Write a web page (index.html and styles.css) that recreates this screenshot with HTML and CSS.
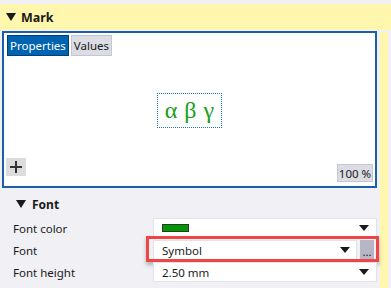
FILE: index.html
```html
<!DOCTYPE html>
<html>
<head>
<meta charset="utf-8">
<link rel="stylesheet" href="styles.css">
</head>
<body>
<div class="page">
  <div class="topgap"></div>
  <div class="header">
    <svg class="tri" width="10" height="8" viewBox="0 0 10 8"><path d="M0 0H10L5 8Z" fill="#1a1a1a"/></svg>
    <span>Mark</span>
  </div>
  <div class="main">
    <div class="content">
      <div class="panel">
        <div class="tabs">
          <div class="tab active">Properties</div>
          <div class="tab">Values</div>
        </div>
        <div class="canvas">
          <div class="greek">α β γ</div>
        </div>
        <div class="bottom">
          <div class="plus">
            <svg width="14" height="14" viewBox="0 0 14 14"><path d="M7 1V13M1 7H13" stroke="#333" stroke-width="2"/></svg>
          </div>
          <div class="zoom">100 %</div>
        </div>
      </div>
      <div class="section">
        <svg class="tri" width="10" height="8" viewBox="0 0 10 8"><path d="M0 0H10L5 8Z" fill="#1a1a1a"/></svg>
        <span>Font</span>
      </div>
      <div class="props">
        <div class="row">
          <div class="label">Font color</div>
          <div class="field">
            <span class="swatch"></span>
            <svg class="arrow" width="10" height="6" viewBox="0 0 10 6"><path d="M0 0H10L5 6Z" fill="#1a1a1a"/></svg>
          </div>
        </div>
        <div class="row hl">
          <div class="label">Font</div>
          <div class="combo">
            <div class="field narrow">
              <span class="val">Symbol</span>
              <svg class="arrow" width="10" height="6" viewBox="0 0 10 6"><path d="M0 0H10L5 6Z" fill="#1a1a1a"/></svg>
            </div>
            <div class="dots">...</div>
          </div>
          <div class="redbox"></div>
        </div>
        <div class="row">
          <div class="label">Font height</div>
          <div class="field">
            <span class="val">2.50 mm</span>
            <svg class="arrow" width="10" height="6" viewBox="0 0 10 6"><path d="M0 0H10L5 6Z" fill="#1a1a1a"/></svg>
          </div>
        </div>
      </div>
    </div>
    <div class="strip"></div>
  </div>
</div>
</body>
</html>
```

FILE: styles.css
```css
html, body {
  margin: 0;
  padding: 0;
}
body {
  width: 391px;
  height: 288px;
  overflow: hidden;
  background: #f0f0f5;
  font-family: "Noto Sans", "Open Sans", sans-serif;
  font-size: 11.5px;
  color: #1a1a1a;
}
.page {
  display: flex;
  flex-direction: column;
  height: 288px;
}
.topgap {
  height: 4px;
}
.header {
  height: 26px;
  background: #fff7ad;
  display: flex;
  align-items: center;
  padding-left: 6px;
  gap: 5px;
  font-weight: bold;
  font-size: 12.5px;
}
.main {
  flex: 1;
  display: flex;
  padding-top: 1px;
}
.content {
  margin-left: 2px;
  width: 375px;
  display: flex;
  flex-direction: column;
}
.strip {
  margin-left: 3px;
  margin-top: 1px;
  width: 8px;
  background: #fff7ad;
}
.panel {
  height: 157px;
  box-sizing: border-box;
  border: 2px solid #1d5ea8;
  background: #fff;
  padding: 2px 2px 4px 2px;
  display: flex;
  flex-direction: column;
}
.tabs {
  display: flex;
  gap: 2px;
  margin-left: 1px;
  height: 21px;
}
.tab {
  box-sizing: border-box;
  height: 21px;
  padding: 0 2px;
  display: flex;
  align-items: center;
  background: #dcdce4;
  border: 1px solid #c6c6d0;
  color: #1a1a1a;
}
.tab.active {
  background: #0063b1;
  border-color: #003f7a;
  color: #fff;
}
.canvas {
  flex: 1;
  display: flex;
  justify-content: center;
  align-items: flex-start;
  padding-top: 37px;
}
.greek {
  width: 65px;
  height: 35px;
  box-sizing: border-box;
  border: 1px dotted #1f6fbf;
  color: #1a9e1a;
  font-family: "Liberation Serif", "DejaVu Serif", serif;
  font-size: 24px;
  display: flex;
  align-items: center;
  justify-content: center;
  white-space: nowrap;
  word-spacing: 1px;
}
.bottom {
  height: 24px;
  display: flex;
  justify-content: space-between;
}
.plus {
  width: 20px;
  height: 18px;
  background: #dcdcdc;
  display: flex;
  align-items: center;
  justify-content: center;
}
.zoom {
  align-self: flex-end;
  box-sizing: border-box;
  width: 36px;
  height: 18px;
  background: #dcdce4;
  border: 1px solid #c6c6d0;
  display: flex;
  align-items: center;
  justify-content: center;
}
.section {
  height: 16px;
  margin-top: 8px;
  padding-left: 14px;
  display: flex;
  align-items: center;
  gap: 6px;
  font-weight: bold;
  font-size: 12px;
}
.props {
  margin-top: 6px;
  display: flex;
  flex-direction: column;
  gap: 2px;
}
.row {
  position: relative;
  height: 20px;
  display: flex;
  align-items: center;
}
.label {
  width: 140px;
  padding-left: 11px;
  flex: none;
}
.field {
  flex: 1;
  height: 20px;
  box-sizing: border-box;
  background: #fff;
  border: 1px solid #e2e2ea;
  display: flex;
  align-items: center;
  padding-left: 8px;
  padding-right: 7px;
}
.field .arrow {
  margin-left: auto;
}
.swatch {
  width: 25px;
  height: 6px;
  background: #009900;
  border: 1px solid #333;
}
.combo {
  flex: 1;
  display: flex;
  gap: 3px;
  height: 20px;
}
.field.narrow {
  padding-right: 6px;
}
.dots {
  width: 14px;
  height: 19px;
  background: #b6b6c6;
  display: flex;
  align-items: flex-end;
  justify-content: center;
  line-height: 14px;
  margin-right: 3px;
}
.redbox {
  position: absolute;
  left: 144px;
  right: -2px;
  top: -4px;
  bottom: -2px;
  border: 3px solid #ef4545;
  box-shadow: 0 3px 4px rgba(0,0,0,0.25);
  pointer-events: none;
}
```
